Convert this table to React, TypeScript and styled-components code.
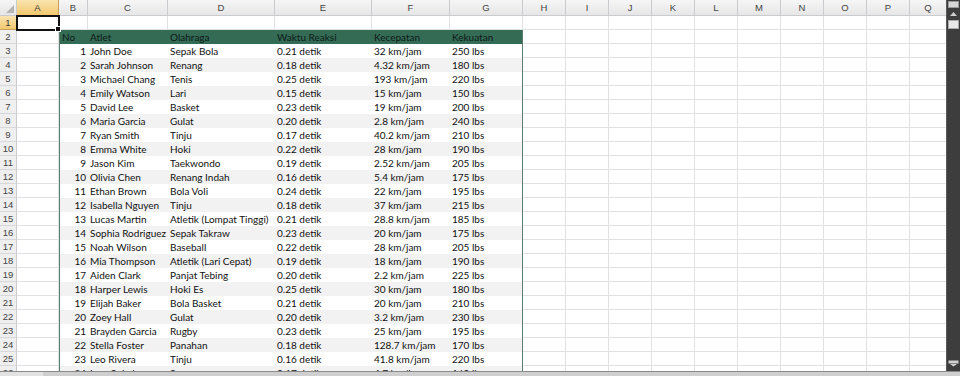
import React from 'react';
import styled, { createGlobalStyle, css } from 'styled-components';

const GlobalStyle = createGlobalStyle`
  html, body {
    margin: 0;
    padding: 0;
    background: #ffffff;
    overflow: hidden;
  }
  body {
    font-family: Lato, "Liberation Sans", sans-serif;
  }
`;

interface Athlete {
    name: string;
    sport: string;
    reaction: string;
    speed: string;
    strength: string;
}

const athletes: Athlete[] = [
    { name: 'John Doe', sport: 'Sepak Bola', reaction: '0.21 detik', speed: '32 km/jam', strength: '250 lbs' },
    { name: 'Sarah Johnson', sport: 'Renang', reaction: '0.18 detik', speed: '4.32 km/jam', strength: '180 lbs' },
    { name: 'Michael Chang', sport: 'Tenis', reaction: '0.25 detik', speed: '193 km/jam', strength: '220 lbs' },
    { name: 'Emily Watson', sport: 'Lari', reaction: '0.15 detik', speed: '15 km/jam', strength: '150 lbs' },
    { name: 'David Lee', sport: 'Basket', reaction: '0.23 detik', speed: '19 km/jam', strength: '200 lbs' },
    { name: 'Maria Garcia', sport: 'Gulat', reaction: '0.20 detik', speed: '2.8 km/jam', strength: '240 lbs' },
    { name: 'Ryan Smith', sport: 'Tinju', reaction: '0.17 detik', speed: '40.2 km/jam', strength: '210 lbs' },
    { name: 'Emma White', sport: 'Hoki', reaction: '0.22 detik', speed: '28 km/jam', strength: '190 lbs' },
    { name: 'Jason Kim', sport: 'Taekwondo', reaction: '0.19 detik', speed: '2.52 km/jam', strength: '205 lbs' },
    { name: 'Olivia Chen', sport: 'Renang Indah', reaction: '0.16 detik', speed: '5.4 km/jam', strength: '175 lbs' },
    { name: 'Ethan Brown', sport: 'Bola Voli', reaction: '0.24 detik', speed: '22 km/jam', strength: '195 lbs' },
    { name: 'Isabella Nguyen', sport: 'Tinju', reaction: '0.18 detik', speed: '37 km/jam', strength: '215 lbs' },
    { name: 'Lucas Martin', sport: 'Atletik (Lompat Tinggi)', reaction: '0.21 detik', speed: '28.8 km/jam', strength: '185 lbs' },
    { name: 'Sophia Rodriguez', sport: 'Sepak Takraw', reaction: '0.23 detik', speed: '20 km/jam', strength: '175 lbs' },
    { name: 'Noah Wilson', sport: 'Baseball', reaction: '0.22 detik', speed: '28 km/jam', strength: '205 lbs' },
    { name: 'Mia Thompson', sport: 'Atletik (Lari Cepat)', reaction: '0.19 detik', speed: '18 km/jam', strength: '190 lbs' },
    { name: 'Aiden Clark', sport: 'Panjat Tebing', reaction: '0.20 detik', speed: '2.2 km/jam', strength: '225 lbs' },
    { name: 'Harper Lewis', sport: 'Hoki Es', reaction: '0.25 detik', speed: '30 km/jam', strength: '180 lbs' },
    { name: 'Elijah Baker', sport: 'Bola Basket', reaction: '0.21 detik', speed: '20 km/jam', strength: '210 lbs' },
    { name: 'Zoey Hall', sport: 'Gulat', reaction: '0.20 detik', speed: '3.2 km/jam', strength: '230 lbs' },
    { name: 'Brayden Garcia', sport: 'Rugby', reaction: '0.23 detik', speed: '25 km/jam', strength: '195 lbs' },
    { name: 'Stella Foster', sport: 'Panahan', reaction: '0.18 detik', speed: '128.7 km/jam', strength: '170 lbs' },
    { name: 'Leo Rivera', sport: 'Tinju', reaction: '0.16 detik', speed: '41.8 km/jam', strength: '220 lbs' },
    { name: 'Ivan Sokolov', sport: 'Senam', reaction: '0.17 detik', speed: '4.7 km/jam', strength: '160 lbs' },
];

const columns = ['A', 'B', 'C', 'D', 'E', 'F', 'G', 'H', 'I', 'J', 'K', 'L', 'M', 'N', 'O', 'P', 'Q'];
const widths = [42, 29, 80, 107, 97, 78, 73, 43, 43, 43, 43, 43, 43, 43, 43, 43, 37];
const headers = ['No', 'Atlet', 'Olahraga', 'Waktu Reaksi', 'Kecepatan', 'Kekuatan'];

const ROW_H = 14;
const GREEN = '#336b55';

const Window = styled.div`
  width: 960px;
  height: 376px;
  display: flex;
  flex-direction: column;
  overflow: hidden;
  background: #fff;
`;

const Body = styled.div`
  flex: 1;
  display: flex;
  min-height: 0;
`;

const Grid = styled.div`
  flex: 1;
  display: grid;
  grid-template-columns: 17px ${widths.map(w => `${w}px`).join(' ')};
  grid-template-rows: 16px;
  grid-auto-rows: ${ROW_H}px;
  overflow: hidden;
  font-size: 10px;
  color: #111;
`;

const headerBg = css`
  background: linear-gradient(#f6f6f6, #e6e6e6);
  color: #444;
  border-right: 1px solid #c9cbce;
  border-bottom: 1px solid #c9cbce;
`;

const selectedBg = css`
  background: linear-gradient(#fae4b0, #f3c86e);
  color: #3a3a3a;
  border-right: 1px solid #c9a05a;
  border-bottom: 1px solid #c9a05a;
`;

const Corner = styled.div`
  ${headerBg};
  position: relative;
  &::after {
    content: '';
    position: absolute;
    right: 2px;
    bottom: 2px;
    border-style: solid;
    border-width: 0 0 8px 8px;
    border-color: transparent transparent #b5b5b5 transparent;
  }
`;

const ColHead = styled.div<{ $selected?: boolean }>`
  ${p => (p.$selected ? selectedBg : headerBg)};
  display: flex;
  align-items: center;
  justify-content: center;
  font-family: "Liberation Sans", Arial, sans-serif;
  font-size: 9.5px;
`;

const RowHead = styled.div<{ $selected?: boolean }>`
  ${p => (p.$selected ? selectedBg : css`
    background: #efefef;
    color: #444;
    border-right: 1px solid #c9cbce;
    border-bottom: 1px solid #d6d8db;
  `)};
  display: flex;
  align-items: center;
  justify-content: center;
  font-family: "Liberation Sans", Arial, sans-serif;
  font-size: 9.5px;
`;

type Tone = 'plain' | 'head' | 'white' | 'band';

const Cell = styled.div<{ $tone: Tone; $right?: boolean; $edgeL?: boolean; $edgeR?: boolean; $active?: boolean }>`
  position: relative;
  display: flex;
  align-items: center;
  justify-content: ${p => (p.$right ? 'flex-end' : 'flex-start')};
  padding: 0 2px;
  white-space: nowrap;
  overflow: visible;
  box-sizing: border-box;
  ${p => p.$tone === 'plain' && css`
    border-right: 1px solid #dfe1e3;
    border-bottom: 1px solid #dfe1e3;
  `}
  ${p => p.$tone === 'head' && css`
    background: ${GREEN};
    color: #101a15;
  `}
  ${p => p.$tone === 'white' && css`
    background: #ffffff;
  `}
  ${p => p.$tone === 'band' && css`
    background: #f2f2f2;
  `}
  ${p => p.$edgeL && css`
    border-left: 1px solid #5d7d70;
  `}
  ${p => p.$edgeR && css`
    border-right: 1px solid #5d7d70;
  `}
  ${p => p.$active && css`
    outline: 2px solid #111;
    outline-offset: -1px;
    z-index: 2;
    &::after {
      content: '';
      position: absolute;
      right: -3px;
      bottom: -3px;
      width: 4px;
      height: 4px;
      background: #111;
      border: 1px solid #fff;
    }
  `}
`;

const Scrollbar = styled.div`
  width: 13px;
  background: #3d3d3d;
  border-left: 1px solid #5a5a5a;
  display: flex;
  flex-direction: column;
  align-items: center;
  padding-top: 1px;
  gap: 3px;
`;

const SplitBox = styled.div`
  width: 9px;
  height: 5px;
  background: #d8d8d8;
  border: 1px solid #9a9a9a;
`;

const Thumb = styled.div`
  width: 9px;
  height: 7px;
  background: #e8e8e8;
  border: 1px solid #aaa;
`;

const Spacer = styled.div`
  flex: 1;
`;

const Arrow = styled.svg`
  display: block;
`;

const Footer = styled.div`
  height: 4px;
  display: flex;
  border-top: 1px solid #8a8a8a;
`;

const FooterLeft = styled.div`
  width: 43px;
  background: #e2e2e2;
`;

const FooterRest = styled.div`
  flex: 1;
  background: #cfcfcf;
`;

function tableCell(rowIdx: number, colIdx: number): React.ReactNode {
    // rowIdx: sheet row number (1-based), colIdx: 0 = A
    if (rowIdx === 2) return headers[colIdx - 1];
    const a = athletes[rowIdx - 3];
    if (!a) return '';
    switch (colIdx) {
        case 1: return rowIdx - 2;
        case 2: return a.name;
        case 3: return a.sport;
        case 4: return a.reaction;
        case 5: return a.speed;
        default: return a.strength;
    }
}

export default function App() {
    const rows = Array.from({ length: 26 }, (_, i) => i + 1);

    return (
        <Window>
            <GlobalStyle />
            <Body>
                <Grid>
                    <Corner />
                    {columns.map((c, i) => (
                        <ColHead key={c} $selected={i === 0}>{c}</ColHead>
                    ))}
                    {rows.map(r => (
                        <React.Fragment key={r}>
                            <RowHead $selected={r === 1}>{r}</RowHead>
                            {columns.map((c, ci) => {
                                const inTable = r >= 2 && ci >= 1 && ci <= 6;
                                if (!inTable) {
                                    return <Cell key={c} $tone="plain" $active={r === 1 && ci === 0} />;
                                }
                                const tone: Tone = r === 2 ? 'head' : (r % 2 === 1 ? 'white' : 'band');
                                return (
                                    <Cell
                                        key={c}
                                        $tone={tone}
                                        $right={ci === 1 && r > 2}
                                        $edgeL={ci === 1}
                                        $edgeR={ci === 6}
                                    >
                                        {tableCell(r, ci)}
                                    </Cell>
                                );
                            })}
                        </React.Fragment>
                    ))}
                </Grid>
                <Scrollbar>
                    <SplitBox />
                    <Arrow width="9" height="6" viewBox="0 0 9 6">
                        <path d="M4.5 1 L8 5 L1 5 Z" fill="#d0d0d0" />
                    </Arrow>
                    <Thumb />
                    <Spacer />
                    <Arrow width="11" height="7" viewBox="0 0 11 7" style={{ marginBottom: 4 }}>
                        <rect x="0.5" y="0.5" width="10" height="3" fill="#d0d0d0" />
                        <path d="M2 4 L9 4 L5.5 6.5 Z" fill="#d0d0d0" />
                    </Arrow>
                </Scrollbar>
            </Body>
            <Footer>
                <FooterLeft />
                <FooterRest />
            </Footer>
        </Window>
    );
}
